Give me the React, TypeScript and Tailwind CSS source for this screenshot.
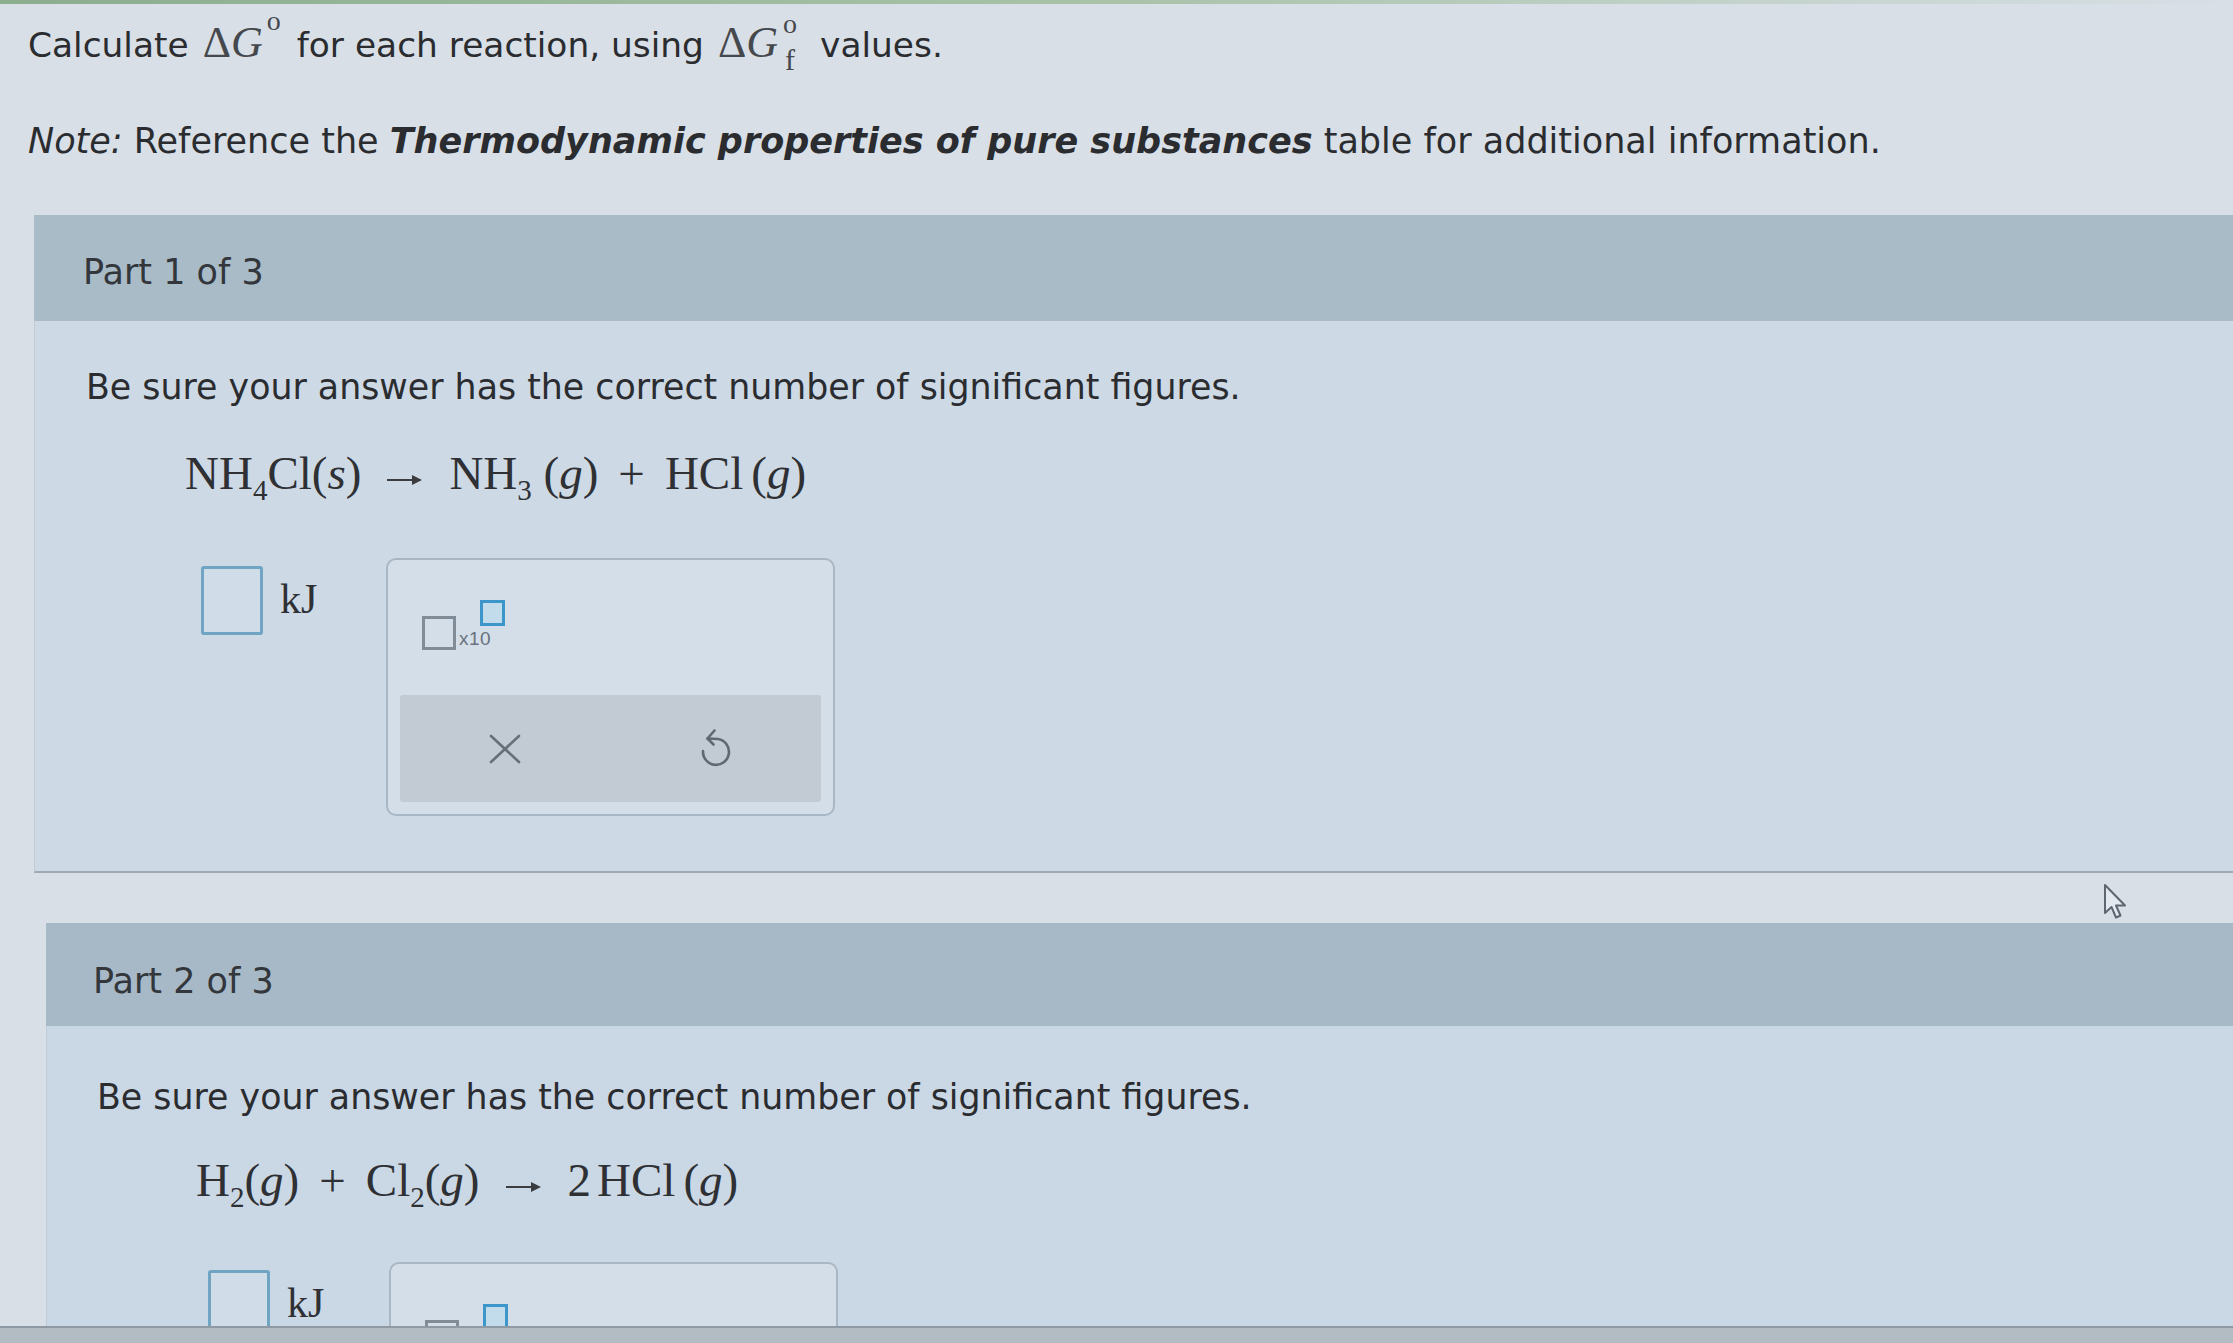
import type { ReactNode } from 'react'

const sans = "[font-family:'DejaVu_Sans','Verdana',sans-serif]"
const serif = "[font-family:'Liberation_Serif','Times_New_Roman',serif]"

function Sub({ children }: { children: ReactNode }) {
  return <span className="relative top-[11px] text-[29px]">{children}</span>
}

function Plus() {
  return <span className="mx-[20px]">+</span>
}

function ReactionArrow() {
  return (
    <svg width="36" height="14" viewBox="0 0 36 14" className="mx-[26px] inline-block align-[2px]">
      <line x1="0" y1="7" x2="27" y2="7" stroke="#3a3c40" strokeWidth="2" />
      <polygon points="25,2 35,7 25,12" fill="#3a3c40" />
    </svg>
  )
}

function XIcon() {
  return (
    <svg width="34" height="30" viewBox="0 0 34 30" fill="none">
      <line x1="3" y1="2" x2="31" y2="28" stroke="#67707a" strokeWidth="2.6" strokeLinecap="round" />
      <line x1="31" y1="2" x2="3" y2="28" stroke="#67707a" strokeWidth="2.6" strokeLinecap="round" />
    </svg>
  )
}

function UndoIcon() {
  return (
    <svg width="34" height="40" viewBox="0 0 34 40" fill="none" className="-mt-[4px]">
      <path d="M8.5 11.5 L19 12 A13 13 0 1 1 4 24" stroke="#5f6873" strokeWidth="2.6" strokeLinecap="round" strokeLinejoin="round" />
      <path d="M15.5 3.5 L8.5 11.5 L14.5 17.5" stroke="#5f6873" strokeWidth="2.6" strokeLinecap="round" strokeLinejoin="round" />
    </svg>
  )
}

function SciNotation() {
  return (
    <div className="flex items-start">
      <div className="mt-[16px] h-[34px] w-[34px] border-[3px] border-[#808c98]" />
      <span className="mt-[29px] ml-[3px] [font-family:'Liberation_Sans',sans-serif] text-[19px] leading-[19px] tracking-[0.5px] text-[#68717c]">
        x10
      </span>
      <div className="-ml-[11px] h-[26px] w-[25px] border-[3px] border-[#3d96c9] bg-[#c2dcec]" />
    </div>
  )
}

function AnswerRow({ indent, popupGap }: { indent: number; popupGap: string }) {
  return (
    <div className="flex items-start" style={{ paddingLeft: indent }}>
      <div className="mt-[8px] h-[69px] w-[62px] rounded-[3px] border-[3px] border-[#6fa4c3] bg-[#d0dde8]" />
      <div className={`${serif} mt-[8px] ml-[17px] h-[69px] w-[40px] text-[42px] leading-[66px] text-[#2e3034]`}>kJ</div>
      <div className={`${popupGap} flex h-[258px] w-[449px] flex-col rounded-[10px] border-2 border-[#a9b7c4] bg-[#d3dee9] p-[12px]`}>
        <div className="h-[123px] pl-[22px] pt-[28px]">
          <SciNotation />
        </div>
        <div className="grid h-[107px] grid-cols-2 items-center rounded-[3px] bg-[#c2cbd3]">
          <div className="flex justify-center">
            <XIcon />
          </div>
          <div className="flex justify-center">
            <UndoIcon />
          </div>
        </div>
      </div>
    </div>
  )
}

export default function App() {
  return (
    <div className={`${sans} relative h-[1343px] w-[2233px] overflow-hidden bg-[#d8dfe6] text-[#2a2c30]`}>
      <div className="h-[4px] w-full bg-gradient-to-r from-[#8bae8f] via-[#a9c2a8] to-[#d8dfe6]" />

      <div className="pl-[28px] pt-[15px]">
        <p className="flex h-[48px] items-baseline whitespace-pre text-[34.4px] leading-[48px]">
          <span>Calculate</span>
          <span className={`${serif} ml-[14px] text-[44px] text-[#45484d]`}>
            Δ<i>G</i>
          </span>
          <span className={`${serif} relative ml-[4px] w-[14px] self-stretch text-[#45484d]`}>
            <span className="absolute left-0 -top-[12px] text-[28px] leading-[28px]">o</span>
          </span>
          <span className="ml-[16px]">for each reaction, using</span>
          <span className={`${serif} ml-[14px] text-[44px] text-[#45484d]`}>
            Δ<i>G</i>
          </span>
          <span className={`${serif} relative ml-[5px] w-[14px] self-stretch text-[#45484d]`}>
            <span className="absolute left-0 -top-[9px] text-[28px] leading-[28px]">o</span>
            <span className="absolute left-[2px] top-[26px] text-[30px] leading-[30px]">f</span>
          </span>
          <span className="ml-[23px]">values.</span>
        </p>

        <p className="mt-[50px] whitespace-pre text-[35px] leading-[48px]">
          <i>Note:</i> Reference the <b className="italic">Thermodynamic properties of pure substances</b> table for additional information.
        </p>
      </div>

      {/* Part 1 */}
      <section className="mt-[50px] ml-[34px]">
        <div className="flex h-[106px] items-center bg-[#a9bbc7] pl-[49px] pt-[8px] text-[35px] text-[#33363b]">Part 1 of 3</div>
        <div className="border-b-2 border-l border-b-[#9ea9b4] border-l-[#c2cbd4] bg-[#cdd9e5] pb-[55px] pl-[51px] pt-[42px]">
          <p className="text-[34.8px] leading-[48px]">Be sure your answer has the correct number of significant figures.</p>
          <p className={`${serif} mt-[32px] whitespace-pre pl-[99px] text-[47px] leading-[60px] text-[#2e3034]`}>
            NH<Sub>4</Sub>Cl(<i>s</i>)<ReactionArrow />NH<Sub>3</Sub> (<i>g</i>)<Plus />HCl<span className="ml-[8px]">(<i>g</i>)</span>
          </p>
          <div className="mt-[49px]">
            <AnswerRow indent={115} popupGap="ml-[66px]" />
          </div>
        </div>
      </section>

      {/* Part 2 */}
      <section className="mt-[50px] ml-[46px]">
        <div className="flex h-[103px] items-center bg-[#a7b9c7] pl-[47px] pt-[14px] text-[35px] text-[#33363b]">Part 2 of 3</div>
        <div className="border-l border-l-[#c2cbd4] bg-[#cad7e4] pl-[50px] pt-[47px]">
          <p className="text-[34.8px] leading-[48px]">Be sure your answer has the correct number of significant figures.</p>
          <p className={`${serif} mt-[29px] whitespace-pre pl-[99px] text-[47px] leading-[60px] text-[#2e3034]`}>
            H<Sub>2</Sub>(<i>g</i>)<Plus />Cl<Sub>2</Sub>(<i>g</i>)<ReactionArrow />2<span className="ml-[6px]">HCl</span><span className="ml-[8px]">(<i>g</i>)</span>
          </p>
          <div className="mt-[46px]">
            <AnswerRow indent={111} popupGap="ml-[62px]" />
          </div>
        </div>
      </section>

      {/* mouse pointer */}
      <svg width="28" height="38" viewBox="0 0 28 38" className="absolute left-[2102px] top-[883px]">
        <path d="M3 2 L3 30 L9.5 24 L14 34.5 L18.5 32.5 L14 22.5 L23 22.5 Z" fill="#e3e9ef" stroke="#5d6671" strokeWidth="2" strokeLinejoin="round" />
      </svg>

      {/* screen bezel at the bottom of the photo */}
      <div className="absolute inset-x-0 bottom-0 h-[17px] border-t-2 border-[#8f99a3] bg-[#b3bbc3]" />
    </div>
  )
}
